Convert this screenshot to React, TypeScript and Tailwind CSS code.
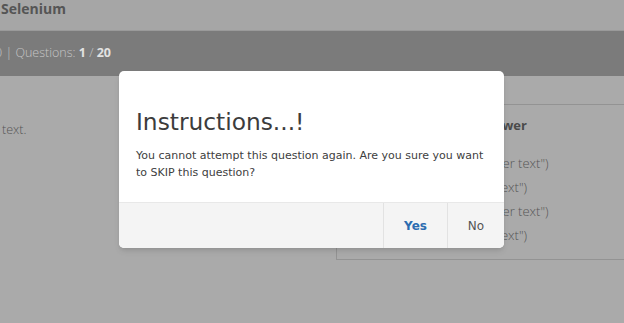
import React from "react";

export default function App() {
  const options = [
    'By.linkText("Linker text")',
    'By.linkText("Lin text")',
    'By.linkText("Linker text")',
    'By.linkText("Lin text")',
  ];
  return (
    <div className="relative w-[624px] h-[323px] overflow-hidden bg-[#aaaaaa] font-['Open_Sans',sans-serif]">
      <div className="h-[30px] bg-[#a6a6a6] flex items-start pl-[1px]">
        <span className="text-[14px] font-bold text-[#555555] leading-[17px]">Selenium</span>
      </div>
      <div className="h-[46px] bg-[#7b7b7b] border-t border-[#9a9a9a] flex items-center -ml-[5px]">
        <span className="text-[12.5px] font-light text-[#c6c6c6] whitespace-nowrap">
          0 | Questions: <b className="font-bold text-[#e2e2e2]">1</b> / <b className="font-bold text-[#e2e2e2]">20</b>
        </span>
      </div>
      <div className="flex">
        <div className="w-[336px] shrink-0 pt-[45px] pl-[2px]">
          <p className="text-[12.5px] font-light text-[#555555] leading-[18px]">text.</p>
        </div>
        <div className="mt-[28px] h-[156px] flex-1 min-w-0 border-l border-t border-b border-[#939393] pl-[14px] pt-[10px]">
          <div className="text-[13px] font-bold text-[#4a4a4a] leading-[20px] pl-[85px] whitespace-nowrap">Select Answer</div>
          <div className="mt-[17px] flex flex-col pl-[40px]">
            {options.map((o, i) => (
              <div key={i} className={`h-[24px] flex items-center gap-[6px] text-[13px] font-light text-[#555555] whitespace-nowrap ${i % 2 === 1 ? "-ml-[3px]" : ""}`}>
                <span className="w-[12px] h-[12px] rounded-full border border-[#888]" />
                <span>{o}</span>
              </div>
            ))}
          </div>
        </div>
      </div>

      <div className="absolute left-[119px] top-[71px] w-[385px] h-[177px] bg-white rounded-[5px] shadow-md overflow-hidden flex flex-col font-['DejaVu_Sans',Verdana,sans-serif]">
        <div className="flex-1 px-[17px] pt-[37px]">
          <h2 className="text-[23.3px] font-normal text-[#3c3c3c] leading-[28px]">Instructions...!</h2>
          <p className="mt-[11px] text-[11px] text-[#404040] leading-[17px]">
            You cannot attempt this question again. Are you sure you want to SKIP this question?
          </p>
        </div>
        <div className="h-[46px] bg-[#f4f4f4] border-t border-[#e8e8e8] flex justify-end">
          <button className="w-[64px] h-full border-l border-[#e2e2e2] text-[12px] font-bold text-[#2b6cb0]">Yes</button>
          <button className="w-[57px] h-full border-l border-[#e2e2e2] text-[12px] text-[#555555]">No</button>
        </div>
      </div>
    </div>
  );
}
